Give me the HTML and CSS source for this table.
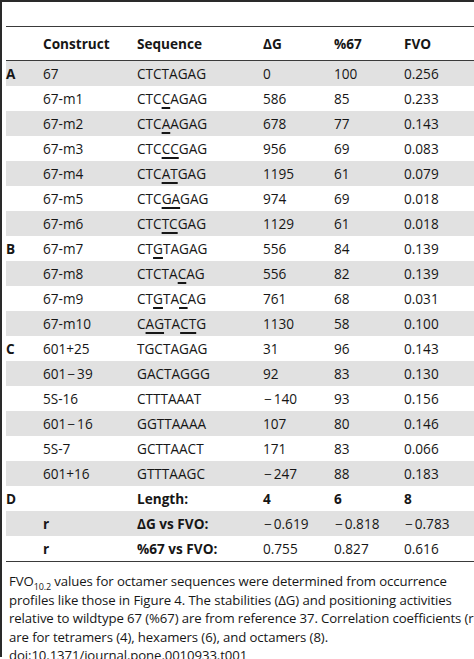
FILE: index.html
```html
<!DOCTYPE html>
<html>
<head>
<meta charset="utf-8">
<link rel="stylesheet" href="styles.css">
</head>
<body>
<div class="frame">
  <div class="table">
    <div class="row head">
      <span></span><span>Construct</span><span>Sequence</span><span>ΔG</span><span>%67</span><span>FVO</span>
    </div>
    <div class="row g"><span class="b">A</span><span>67</span><span>CTCTAGAG</span><span>0</span><span>100</span><span>0.256</span></div>
    <div class="row"><span></span><span>67-m1</span><span>CTC<u>C</u>AGAG</span><span>586</span><span>85</span><span>0.233</span></div>
    <div class="row g"><span></span><span>67-m2</span><span>CTC<u>A</u>AGAG</span><span>678</span><span>77</span><span>0.143</span></div>
    <div class="row"><span></span><span>67-m3</span><span>CTC<u>CC</u>GAG</span><span>956</span><span>69</span><span>0.083</span></div>
    <div class="row g"><span></span><span>67-m4</span><span>CTC<u>AT</u>GAG</span><span>1195</span><span>61</span><span>0.079</span></div>
    <div class="row"><span></span><span>67-m5</span><span>CTC<u>GA</u>GAG</span><span>974</span><span>69</span><span>0.018</span></div>
    <div class="row g"><span></span><span>67-m6</span><span>CTC<u>TC</u>GAG</span><span>1129</span><span>61</span><span>0.018</span></div>
    <div class="row"><span class="b">B</span><span>67-m7</span><span>CT<u>G</u>TAGAG</span><span>556</span><span>84</span><span>0.139</span></div>
    <div class="row g"><span></span><span>67-m8</span><span>CTCTA<u>C</u>AG</span><span>556</span><span>82</span><span>0.139</span></div>
    <div class="row"><span></span><span>67-m9</span><span>CT<u>G</u>TA<u>C</u>AG</span><span>761</span><span>68</span><span>0.031</span></div>
    <div class="row g"><span></span><span>67-m10</span><span>C<u>AG</u>TA<u>CT</u>G</span><span>1130</span><span>58</span><span>0.100</span></div>
    <div class="row"><span class="b">C</span><span>601+25</span><span>TGCTAGAG</span><span>31</span><span>96</span><span>0.143</span></div>
    <div class="row g"><span></span><span>601<i class="m">−</i>39</span><span>GACTAGGG</span><span>92</span><span>83</span><span>0.130</span></div>
    <div class="row"><span></span><span>5S-16</span><span>CTTTAAAT</span><span><i class="m">−</i>140</span><span>93</span><span>0.156</span></div>
    <div class="row g"><span></span><span>601<i class="m">−</i>16</span><span>GGTTAAAA</span><span>107</span><span>80</span><span>0.146</span></div>
    <div class="row"><span></span><span>5S-7</span><span>GCTTAACT</span><span>171</span><span>83</span><span>0.066</span></div>
    <div class="row g"><span></span><span>601+16</span><span>GTTTAAGC</span><span><i class="m">−</i>247</span><span>88</span><span>0.183</span></div>
    <div class="row"><span class="b">D</span><span></span><span class="b">Length:</span><span class="b">4</span><span class="b">6</span><span class="b">8</span></div>
    <div class="row g"><span></span><span class="b">r</span><span class="b">ΔG vs FVO:</span><span><i class="m">−</i>0.619</span><span><i class="m">−</i>0.818</span><span><i class="m">−</i>0.783</span></div>
    <div class="row last"><span></span><span class="b">r</span><span class="b">%67 vs FVO:</span><span>0.755</span><span>0.827</span><span>0.616</span></div>
  </div>
  <p class="caption">FVO<sub>10.2</sub> values for octamer sequences were determined from occurrence<br>profiles like those in Figure 4. The stabilities (ΔG) and positioning activities<br>relative to wildtype 67 (%67) are from reference 37. Correlation coefficients (r)<br>are for tetramers (4), hexamers (6), and octamers (8).<br>doi:10.1371/journal.pone.0010933.t001</p>
</div>
</body>
</html>
```

FILE: styles.css
```css
html, body {
  margin: 0;
  padding: 0;
  background: #ffffff;
}
body {
  width: 474px;
  height: 659px;
  overflow: hidden;
  font-family: "Open Sans", "DejaVu Sans", sans-serif;
  color: #161616;
}
.frame {
  border-top: 2px solid #2a2a2a;
  border-left: 2px solid #2a2a2a;
  height: 657px;
  box-sizing: border-box;
  padding-left: 4px;
}
.table {
  margin-top: 24px;
  border-top: 1px solid #3a3a3a;
  border-bottom: 1px solid #3a3a3a;
  font-size: 13.6px;
}
.row {
  display: grid;
  grid-template-columns: 37px 94px 126px 71px 70px 1fr;
  height: 25px;
  align-items: center;
  white-space: nowrap;
}
.row.g {
  background: #e1e1e1;
}
.row.head {
  height: 33px;
  font-weight: 700;
  border-bottom: 1px solid #3a3a3a;
}
.b {
  font-weight: 700;
}
.m {
  font-style: normal;
  margin: 0 2px 0 1px;
}
u {
  text-decoration: underline;
  text-decoration-thickness: 2px;
  text-underline-offset: 3px;
}
.caption {
  margin: 10px 0 0 3px;
  font-size: 13.2px;
  line-height: 18.5px;
  white-space: nowrap;
  letter-spacing: -0.1px;
}
.caption sub {
  font-size: 9px;
  line-height: 0;
}
```
